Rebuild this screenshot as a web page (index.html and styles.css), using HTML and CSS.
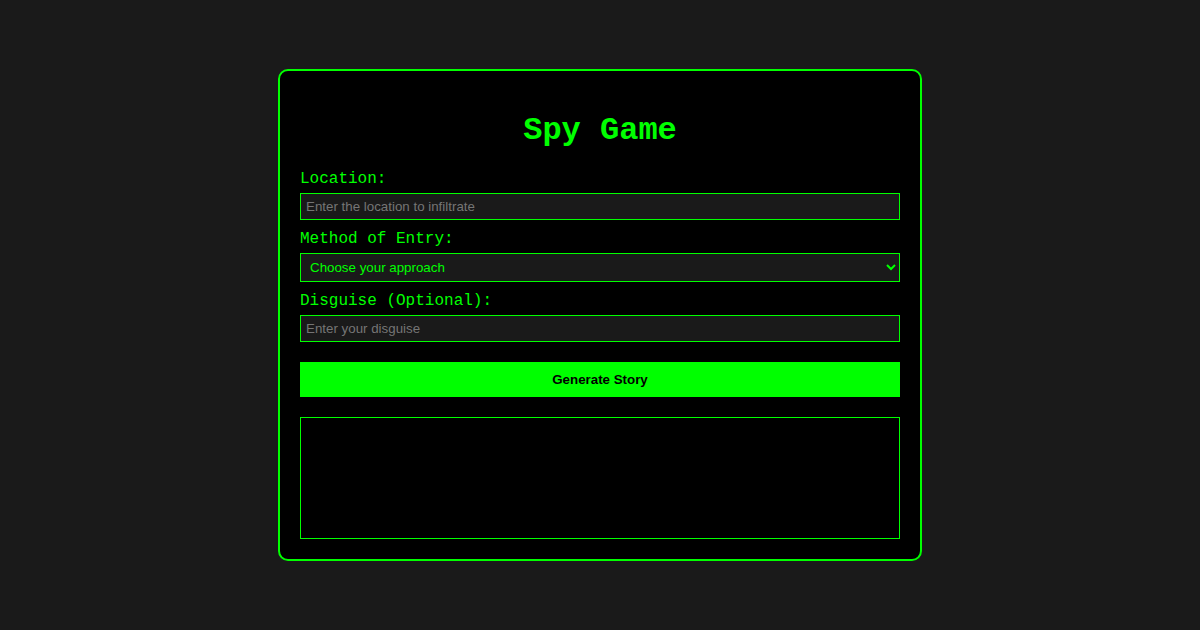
FILE: index.html
```html
<!DOCTYPE html>
<html lang="en">

<head>
    <meta charset="UTF-8" />
    <meta name="viewport" content="width=device-width, initial-scale=1.0" />
    <title>Spy Game</title>
    <link rel="stylesheet" href="styles.css">
</head>

<body>
    <div class="container">
        <h1>Spy Game</h1>

        <label for="location">Location:</label>
        <input type="text" id="location" placeholder="Enter the location to infiltrate">

        <label for="method">Method of Entry:</label>
        <select id="method">
            <option value="">Choose your approach</option>
            <option value="stealth">Stealth</option>
            <option value="hacking">Hacking</option>
            <option value="force">Brute Force</option>
        </select>

        <label for="disguise">Disguise (Optional):</label>
        <input type="text" id="disguise" placeholder="Enter your disguise">

        <button id="generate">Generate Story</button>

        <div id="story" class="story"></div>
    </div>
</body>

</html>
```

FILE: styles.css
```css
body {
    margin: 0;
    font-family: 'Liberation Mono', 'Courier New', monospace;
    background-color: #1a1a1a;
    color: #00ff00;
    display: flex;
    align-items: center;
    justify-content: center;
    height: 100vh;
}

.container {
    width: 600px;
    padding: 20px;
    background-color: #000;
    border: 2px solid #00ff00;
    border-radius: 10px;
}

h1 {
    text-align: center;
    font-size: 2em;
    margin: 21px 0;
    line-height: 37px;
}

label {
    display: block;
    font-size: 16px;
    line-height: 18px;
    margin-bottom: 5px;
}

input[type="text"],
select {
    display: block;
    box-sizing: border-box;
    width: 100%;
    padding: 5px;
    margin: 0 0 10px;
    background-color: #1a1a1a;
    color: #00ff00;
    border: 1px solid #00ff00;
    font-family: 'Liberation Sans', Arial, sans-serif;
    font-size: 13.33px;
    outline: none;
}

input[type="text"] {
    height: 27px;
}

select {
    height: 29px;
    border-radius: 0;
}

input::placeholder {
    color: #757575;
}

button {
    display: block;
    width: 100%;
    margin-top: 20px;
    padding: 10px;
    background-color: #00ff00;
    color: #000;
    border: none;
    font-family: 'Liberation Sans', Arial, sans-serif;
    font-size: 13.33px;
    font-weight: bold;
    line-height: 15px;
    cursor: pointer;
}

.story {
    margin-top: 20px;
    min-height: 100px;
    padding: 10px;
    border: 1px solid #00ff00;
}
```
